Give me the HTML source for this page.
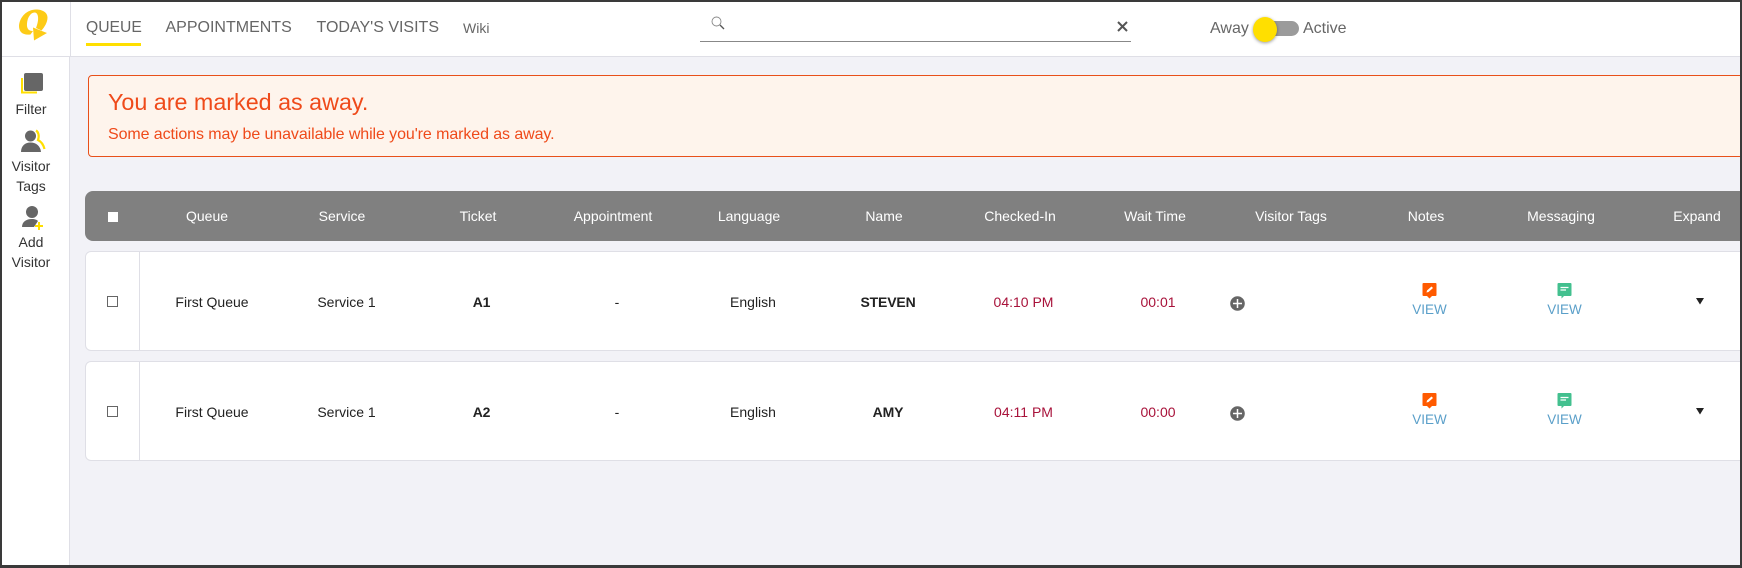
<!DOCTYPE html>
<html><head><meta charset="utf-8">
<style>
html,body{margin:0;padding:0;width:1742px;height:568px;overflow:hidden;background:#f2f2f7;font-family:"Liberation Sans",sans-serif}
.a{position:absolute}
.t{position:absolute;white-space:nowrap;transform:translate(-50%,-50%);font-size:14px;line-height:18px}
.h{color:#fff}
.r{color:#222}
.b{font-weight:bold;letter-spacing:-.15px}
.red{color:#a8123a}
.v{color:#5a9fc9;font-size:13.5px}
.n{position:absolute;white-space:nowrap;font-size:16px;line-height:20px;color:#666}
.s{position:absolute;white-space:nowrap;transform:translate(-50%,-50%);font-size:14px;line-height:18px;color:#333}
</style></head><body>
<!-- header -->
<div class="a" style="left:0;top:0;width:1742px;height:56px;background:#fff"></div>
<div class="a" style="left:0;top:56px;width:1742px;height:1px;background:#dfdfe6"></div>
<div class="a" style="left:70px;top:0;width:1px;height:56px;background:#dfdfe6"></div>
<!-- sidebar -->
<div class="a" style="left:0;top:57px;width:69px;height:511px;background:#fff"></div>
<div class="a" style="left:69px;top:57px;width:1px;height:511px;background:#dfdfe6"></div>
<!-- logo -->
<svg class="a" style="left:0;top:0" width="70" height="56" viewBox="0 0 70 56">
<path d="M36 9.500C27 9.500 19.500 17 19 26C19 32 23 35.500 30.500 34.500L33 31C29 31 26.500 29 27 23.500C27.500 17 31 12.500 34.500 12.500C37.500 12.500 38.500 16 38 20.500C37.500 24 36.500 26.500 36 28L41.500 30.500C44.500 27 47.500 22.500 47.500 17.500C47.500 12.500 42.500 9.500 36 9.500Z" fill="#fdcb17"/>
<path d="M33 27.500L34 40.500L47 33Z" fill="#fdcb17"/>
</svg>
<!-- nav -->
<div class="n" style="left:86px;top:18px;font-size:15.700px">QUEUE</div>
<div class="a" style="left:86px;top:43px;width:55px;height:3px;background:#ffdf00"></div>
<div class="n" style="left:165.500px;top:18px">APPOINTMENTS</div>
<div class="n" style="left:316.500px;top:18px">TODAY'S VISITS</div>
<div class="n" style="left:463px;top:18px;font-size:14px">Wiki</div>
<!-- search -->
<div class="a" style="left:700px;top:41px;width:431px;height:1px;background:#888"></div>
<svg class="a" style="left:710px;top:15px" width="16" height="16" viewBox="0 0 16 16"><circle cx="6.500" cy="6.500" r="4.500" fill="none" stroke="#888" stroke-width=".9"/><path d="M10 10L14 14" stroke="#555" stroke-width="1.300"/></svg>
<svg class="a" style="left:1117px;top:21px" width="11" height="11" viewBox="0 0 11 11"><path d="M1 1L10 10M10 1L1 10" stroke="#555" stroke-width="2"/></svg>
<!-- toggle -->
<div class="n" style="left:1210px;top:19px">Away</div>
<div class="a" style="left:1267px;top:21px;width:32px;height:15px;border-radius:8px;background:#9b9b9b"></div>
<div class="a" style="left:1253px;top:17px;width:24px;height:25px;border-radius:50%;background:#ffdf00;box-shadow:0 1px 3px rgba(0,0,0,.4)"></div>
<div class="n" style="left:1303px;top:19px">Active</div>
<!-- sidebar items -->
<svg class="a" style="left:0;top:57px" width="69" height="180" viewBox="0 57 69 180">
<path d="M22 78V92.500H37" fill="none" stroke="#ffdf00" stroke-width="2"/>
<rect x="24" y="73" width="19" height="18" rx="2" fill="#666"/>
<circle cx="30.500" cy="136" r="5.500" fill="#666"/>
<path d="M21 152C21 146 25 142.500 30.500 142.500C36 142.500 40.500 146 41 152Z" fill="#666"/>
<path d="M36 130.500C38.500 132 39.500 136 38 140C41 141.500 43.500 145 44.500 149" fill="none" stroke="#ffdf00" stroke-width="2.200"/>
<circle cx="32" cy="212" r="6" fill="#666"/>
<path d="M22 227C22 222 26 219 32 219C35 219 37 220 38 221L34 227Z" fill="#666"/>
<path d="M39 222V230M35 226H43" stroke="#ffdf00" stroke-width="2"/>
</svg>
<div class="s" style="left:31px;top:109px">Filter</div>
<div class="s" style="left:31px;top:166px">Visitor</div>
<div class="s" style="left:31px;top:186px">Tags</div>
<div class="s" style="left:31px;top:242px">Add</div>
<div class="s" style="left:31px;top:262px">Visitor</div>
<!-- banner -->
<div class="a" style="left:88px;top:75px;width:1660px;height:80px;box-sizing:content-box;border:1px solid #e8501a;border-radius:4px;background:#fef4ec"></div>
<div class="a" style="left:108px;top:87px;font-size:23.300px;line-height:30px;color:#ef4a1a;white-space:nowrap">You are marked as away.</div>
<div class="a" style="left:108px;top:125px;font-size:16px;line-height:20px;color:#ef4a1a;white-space:nowrap;letter-spacing:-.09px">Some actions may be unavailable while you're marked as away.</div>
<!-- table header -->
<div class="a" style="left:85px;top:191px;width:1670px;height:50px;background:#808080;border-radius:8px 0 0 8px"></div>
<div class="a" style="left:107.500px;top:212px;width:10px;height:10px;background:#fff"></div>
<div class="t h" style="left:207px;top:216px">Queue</div>
<div class="t h" style="left:342px;top:216px">Service</div>
<div class="t h" style="left:478px;top:216px">Ticket</div>
<div class="t h" style="left:613px;top:216px">Appointment</div>
<div class="t h" style="left:749px;top:216px">Language</div>
<div class="t h" style="left:884px;top:216px">Name</div>
<div class="t h" style="left:1020px;top:216px">Checked-In</div>
<div class="t h" style="left:1155px;top:216px">Wait Time</div>
<div class="t h" style="left:1291px;top:216px">Visitor Tags</div>
<div class="t h" style="left:1426px;top:216px">Notes</div>
<div class="t h" style="left:1561px;top:216px">Messaging</div>
<div class="t h" style="left:1697px;top:216px">Expand</div>
<!-- row 1 -->
<div class="a" style="left:85px;top:251px;width:1670px;height:100px;background:#fff;border:1px solid #dfdfe6;border-radius:6px 0 0 6px;box-sizing:border-box"></div>
<div class="a" style="left:139px;top:252px;width:1px;height:98px;background:#dfdfe6"></div>
<div class="a" style="left:107px;top:296px;width:11px;height:11px;border:1px solid #666;box-sizing:border-box"></div>
<div class="t r" style="left:212px;top:302px">First Queue</div>
<div class="t r" style="left:346.500px;top:302px">Service 1</div>
<div class="t r b" style="left:481.500px;top:302px">A1</div>
<div class="t r" style="left:617px;top:302px">-</div>
<div class="t r" style="left:753px;top:302px">English</div>
<div class="t r b" style="left:888px;top:302px">STEVEN</div>
<div class="t red" style="left:1023.500px;top:302px">04:10 PM</div>
<div class="t red" style="left:1158px;top:302px">00:01</div>
<svg class="a" style="left:1230px;top:295.500px" width="15" height="15" viewBox="0 0 15 15"><circle cx="7.500" cy="7.500" r="7.300" fill="#666"/><path d="M7.500 3V12M3 7.500H12" stroke="#fff" stroke-width="1.500"/></svg>
<svg class="a" style="left:1422px;top:283px" width="15" height="16" viewBox="0 0 15 16"><path d="M1.500 0H13.500A1 1 0 0 1 14.500 1V12A1 1 0 0 1 13.500 13H10L7.500 15.500L5 13H1.500A1 1 0 0 1 .5 12V1A1 1 0 0 1 1.500 0Z" fill="#ff5a00"/><path d="M4.500 9.500L5 7.500L9.500 3.500L11 5L6.500 9Z" fill="#fff"/></svg>
<div class="t v" style="left:1429.500px;top:309.500px">VIEW</div>
<svg class="a" style="left:1557px;top:283px" width="15" height="16" viewBox="0 0 15 16"><path d="M1.500 0H13.500A1 1 0 0 1 14.500 1V12A1 1 0 0 1 13.500 13H7L4.500 15.500V13H1.500A1 1 0 0 1 .5 12V1A1 1 0 0 1 1.500 0Z" fill="#43c08f"/><path d="M3.500 4.500H11.500M3.500 7H9" stroke="#fff" stroke-width="1.200"/></svg>
<div class="t v" style="left:1564.500px;top:309.500px">VIEW</div>
<svg class="a" style="left:1695.500px;top:297.500px" width="8" height="7" viewBox="0 0 8 7"><path d="M0 0H8L4 6.500Z" fill="#222"/></svg>
<!-- row 2 -->
<div class="a" style="left:85px;top:361px;width:1670px;height:100px;background:#fff;border:1px solid #dfdfe6;border-radius:6px 0 0 6px;box-sizing:border-box"></div>
<div class="a" style="left:139px;top:362px;width:1px;height:98px;background:#dfdfe6"></div>
<div class="a" style="left:107px;top:406px;width:11px;height:11px;border:1px solid #666;box-sizing:border-box"></div>
<div class="t r" style="left:212px;top:412px">First Queue</div>
<div class="t r" style="left:346.500px;top:412px">Service 1</div>
<div class="t r b" style="left:481.500px;top:412px">A2</div>
<div class="t r" style="left:617px;top:412px">-</div>
<div class="t r" style="left:753px;top:412px">English</div>
<div class="t r b" style="left:888px;top:412px">AMY</div>
<div class="t red" style="left:1023.500px;top:412px">04:11 PM</div>
<div class="t red" style="left:1158px;top:412px">00:00</div>
<svg class="a" style="left:1230px;top:405.500px" width="15" height="15" viewBox="0 0 15 15"><circle cx="7.500" cy="7.500" r="7.300" fill="#666"/><path d="M7.500 3V12M3 7.500H12" stroke="#fff" stroke-width="1.500"/></svg>
<svg class="a" style="left:1422px;top:393px" width="15" height="16" viewBox="0 0 15 16"><path d="M1.500 0H13.500A1 1 0 0 1 14.500 1V12A1 1 0 0 1 13.500 13H10L7.500 15.500L5 13H1.500A1 1 0 0 1 .5 12V1A1 1 0 0 1 1.500 0Z" fill="#ff5a00"/><path d="M4.500 9.500L5 7.500L9.500 3.500L11 5L6.500 9Z" fill="#fff"/></svg>
<div class="t v" style="left:1429.500px;top:419.500px">VIEW</div>
<svg class="a" style="left:1557px;top:393px" width="15" height="16" viewBox="0 0 15 16"><path d="M1.500 0H13.500A1 1 0 0 1 14.500 1V12A1 1 0 0 1 13.500 13H7L4.500 15.500V13H1.500A1 1 0 0 1 .5 12V1A1 1 0 0 1 1.500 0Z" fill="#43c08f"/><path d="M3.500 4.500H11.500M3.500 7H9" stroke="#fff" stroke-width="1.200"/></svg>
<div class="t v" style="left:1564.500px;top:419.500px">VIEW</div>
<svg class="a" style="left:1695.500px;top:407.500px" width="8" height="7" viewBox="0 0 8 7"><path d="M0 0H8L4 6.500Z" fill="#222"/></svg>
<!-- window frame -->
<div class="a" style="left:0;top:0;width:1742px;height:2px;background:#3a3a3a"></div>
<div class="a" style="left:0;top:0;width:2px;height:568px;background:#3a3a3a"></div>
<div class="a" style="left:1740px;top:0;width:2px;height:568px;background:#3a3a3a"></div>
<div class="a" style="left:0;top:565px;width:1742px;height:3px;background:#3a3a3a"></div>
</body></html>
